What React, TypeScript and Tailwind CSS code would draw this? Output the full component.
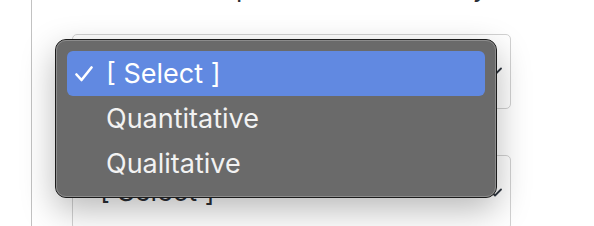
import React from "react";

const options = ["[ Select ]", "Quantitative", "Qualitative"];

const Chevron: React.FC = () => (
  <svg width="14" height="9" viewBox="0 0 14 9" fill="none">
    <path d="M1 1.5L7 7.5L13 1.5" stroke="#2f3640" strokeWidth="1.8" strokeLinecap="round" strokeLinejoin="round" />
  </svg>
);

const Check: React.FC = () => (
  <svg width="18" height="16" viewBox="0 0 18 16" fill="none">
    <path d="M1.5 8.5L6.5 14L16.5 1.5" stroke="white" strokeWidth="2.6" strokeLinecap="round" strokeLinejoin="round" />
  </svg>
);

const SelectBox: React.FC<{ className?: string }> = ({ className }) => (
  <div className={`flex items-center justify-between w-[439px] h-[75px] shrink-0 rounded-[5px] border border-[#d2d2d2] bg-white pl-[27px] pr-[8px] ${className ?? ""}`}>
    <span className="text-[27px] text-[#2b2f36]">[ Select ]</span>
    <Chevron />
  </div>
);

export default function App() {
  return (
    <div
      className="relative w-[594px] h-[226px] overflow-hidden bg-white flex"
      style={{ fontFamily: "Inter, 'Liberation Sans', sans-serif" }}
    >
      <div className="w-[31px] shrink-0" />
      <div className="w-px shrink-0 bg-[#c2c2c2]" />
      <div className="flex flex-col pl-[40px]">
        <div className="-mt-[27px] h-[30px] text-[26px] leading-[30px] text-[#2b2f36] whitespace-nowrap">
          Note: the scope of this data study
        </div>
        <SelectBox className="mt-[31px]" />
        <SelectBox className="mt-[46px]" />
      </div>

      <div className="absolute left-[55px] top-[39px] w-[442px] h-[159px] rounded-[11px] border border-[#1c1c1c] bg-[#6a6a6a] shadow-[0_12px_34px_rgba(0,0,0,0.28)]">
        <div className="h-full rounded-[10px] border border-[#8c8c8c] px-[10px] pt-[10px] flex flex-col">
          {options.map((o, i) => (
            <div
              key={o}
              className={`flex items-center h-[45px] rounded-[6px] shrink-0 ${i === 0 ? "bg-[#6189e1] text-white" : "text-[#f2f2f2]"}`}
            >
              <div className="w-[39px] pl-[8px] flex items-center">{i === 0 && <Check />}</div>
              <span className="text-[27px] leading-none">{o}</span>
            </div>
          ))}
        </div>
      </div>
    </div>
  );
}
